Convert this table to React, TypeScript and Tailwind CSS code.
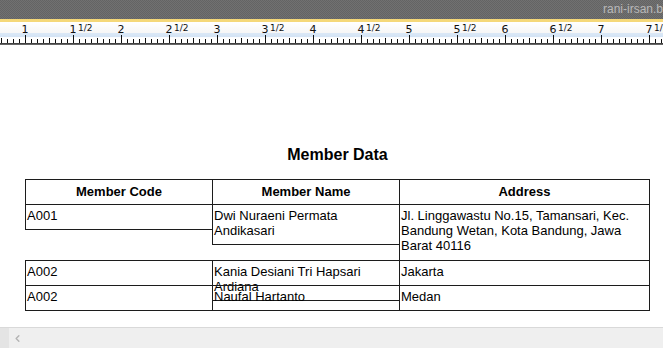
import { ChevronLeft } from "lucide-react";

type Cell = { text: string; h: string; w: string };

const ticks = Array.from({ length: 111 }, (_, i) => 1 + i * 6);
const inches = [1, 2, 3, 4, 5, 6, 7];

function Ruler() {
  return (
    <div className="h-[21px] bg-[linear-gradient(to_bottom,#ffffff_0%,#f6f6f6_50%,#dbe8f6_52%,#d3e3f4_72%,#ffffff_74%,#ffffff_100%)]">
      <svg width="663" height="21" className="block">
        {ticks.map((x) => {
          const major = (x - 25) % 48 === 0;
          const quarter = (x - 25) % 24 === 0;
          const top = major ? 13 : quarter ? 16 : 17;
          return <line key={x} x1={x + 0.5} x2={x + 0.5} y1={top} y2={21} stroke="#111" strokeWidth={1} />;
        })}
        {inches.map((n) => (
          <text key={"i" + n} x={25 + 96 * (n - 1)} y={11} fontSize={11} textAnchor="middle" fontFamily="DejaVu Sans, sans-serif" fill="#111">
            {n}
          </text>
        ))}
        {inches.map((n) => (
          <g key={"h" + n}>
            <text x={73 + 96 * (n - 1)} y={11} fontSize={11} textAnchor="middle" fontFamily="DejaVu Sans, sans-serif" fill="#111">
              {n}
            </text>
            <text x={78 + 96 * (n - 1)} y={9} fontSize={9} fontFamily="DejaVu Sans, sans-serif" fill="#111">
              1/2
            </text>
          </g>
        ))}
      </svg>
    </div>
  );
}

function Row({ cells, h, first }: { cells: Cell[]; h: string; first?: boolean }) {
  return (
    <div className={`flex items-start ${h} ${first ? "" : "-mt-px"}`}>
      {cells.map((c, i) => (
        <div
          key={i}
          className={`${c.w} ${c.h} shrink-0 border border-[#1c1c1c] pl-px pt-[3px] text-[13px] leading-[15px] text-black ${i > 0 ? "-ml-px" : ""}`}
        >
          {c.text}
        </div>
      ))}
    </div>
  );
}

export default function App() {
  const headers = ["Member Code", "Member Name", "Address"];
  const widths = ["w-[188px]", "w-[188px]", "w-[251px]"];

  return (
    <div className="w-[663px] h-[348px] flex flex-col bg-white overflow-hidden font-['Liberation_Sans',Arial,sans-serif]">
      <div className="h-[19px] shrink-0 bg-[#6a6a6a] bg-[image:repeating-conic-gradient(#717171_0_25%,#646464_0_50%)] bg-[length:2px_2px] pl-[603px] overflow-hidden whitespace-nowrap text-[12px] leading-[19px] text-[#b9b9b9]">
        rani-irsan.blogspot.com
      </div>
      <div className="h-[3px] shrink-0 bg-[#f5d879]" />
      <Ruler />
      <div className="h-[2px] shrink-0 bg-[linear-gradient(to_bottom,#2e2e2e,#7a7a7a)]" />

      <main className="flex-1 pt-[100px]">
        <h1 className="ml-[25px] w-[625px] text-center text-[16px] leading-[20px] font-bold text-black mb-[14px]">Member Data</h1>

        <div className="ml-[25px]">
          <div className="flex h-[26px]">
            {headers.map((t, i) => (
              <div
                key={t}
                className={`${widths[i]} h-[26px] shrink-0 border border-[#1c1c1c] flex items-center justify-center text-[13px] font-bold text-black ${i > 0 ? "-ml-px" : ""}`}
              >
                {t}
              </div>
            ))}
          </div>
          <Row
            h="h-[57px]"
            cells={[
              { text: "A001", w: widths[0], h: "h-[26px]" },
              { text: "Dwi Nuraeni Permata Andikasari", w: widths[1], h: "h-[41px]" },
              { text: "Jl. Linggawastu No.15, Tamansari, Kec. Bandung Wetan, Kota Bandung, Jawa Barat 40116", w: widths[2], h: "h-[57px]" },
            ]}
          />
          <Row
            h="h-[26px]"
            cells={[
              { text: "A002", w: widths[0], h: "h-[26px]" },
              { text: "Kania Desiani Tri Hapsari Ardiana", w: widths[1], h: "h-[41px]" },
              { text: "Jakarta", w: widths[2], h: "h-[26px]" },
            ]}
          />
          <Row
            h="h-[26px]"
            cells={[
              { text: "A002", w: widths[0], h: "h-[26px]" },
              { text: "Naufal Hartanto", w: widths[1], h: "h-[26px]" },
              { text: "Medan", w: widths[2], h: "h-[26px]" },
            ]}
          />
        </div>
      </main>

      <div className="h-px shrink-0 bg-[#d9d9d9]" />
      <div className="h-[20px] shrink-0 flex items-center bg-[#efefef]">
        <div className="w-[9px] h-full bg-[#e4e4e4]" />
        <ChevronLeft className="ml-[3px] w-[11px] h-[11px] text-[#b3b3b3]" strokeWidth={3} />
      </div>
    </div>
  );
}
